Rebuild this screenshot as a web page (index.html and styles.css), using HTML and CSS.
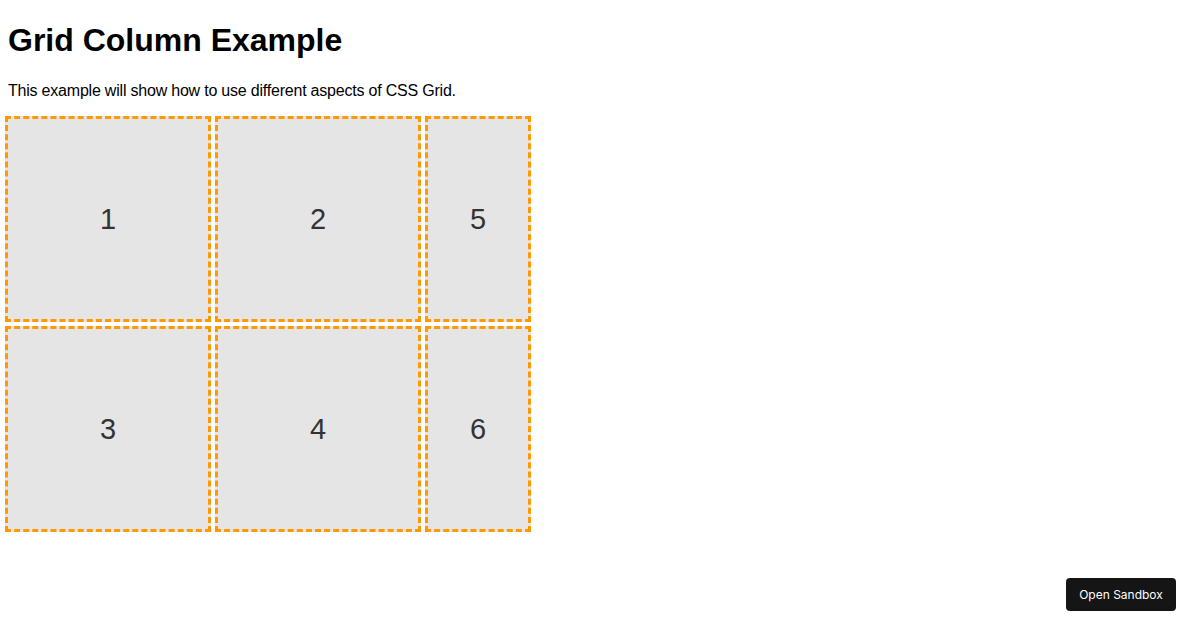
FILE: index.html
```html
<!DOCTYPE html>
<html>
<head>
<meta charset="utf-8">
<link rel="stylesheet" href="styles.css">
</head>
<body>
<h1 class="title">Grid Column Example</h1>
<p class="intro">This example will show how to use different aspects of CSS Grid.</p>
<div class="grid">
  <div class="cell">1</div>
  <div class="cell">2</div>
  <div class="cell">5</div>
  <div class="cell">3</div>
  <div class="cell">4</div>
  <div class="cell">6</div>
</div>
<a class="sandbox-btn">Open Sandbox</a>
</body>
</html>
```
FILE: styles.css
```css
html, body {
  margin: 0;
  padding: 0;
  background: #fff;
}
body {
  font-family: "Liberation Sans", Arial, sans-serif;
  color: #000;
  padding: 22px 8px 0 8px;
}
.title {
  font-size: 32px;
  font-weight: bold;
  margin: 0 0 23px 0;
}
.intro {
  font-size: 16px;
  letter-spacing: -0.21px;
  margin: 0 0 16px 0;
}
.grid {
  display: grid;
  grid-template-columns: 206px 206px 106px;
  grid-auto-rows: 206px;
  gap: 4px;
  margin-left: -3px;
}
.cell {
  box-sizing: border-box;
  border: 3px dashed #ff9900;
  background: #e5e5e5;
  display: flex;
  align-items: center;
  justify-content: center;
  font-size: 29px;
  color: #333;
}
.sandbox-btn {
  position: fixed;
  right: 24px;
  bottom: 19px;
  width: 110px;
  height: 33px;
  box-sizing: border-box;
  background: #151515;
  color: #fff;
  border-radius: 4px;
  font-family: Inter, "Liberation Sans", sans-serif;
  font-size: 12px;
  display: flex;
  align-items: center;
  justify-content: center;
}
```
